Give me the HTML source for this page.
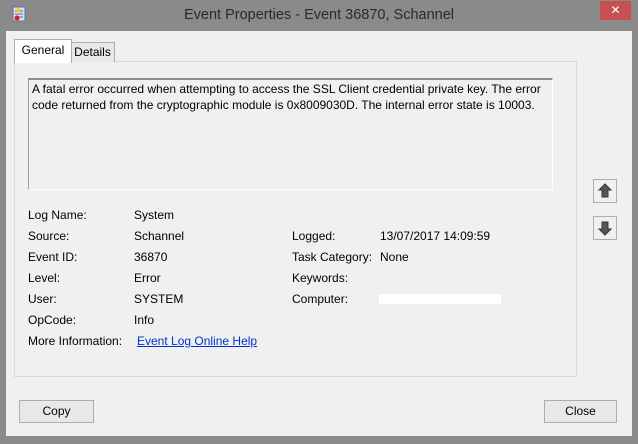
<!DOCTYPE html>
<html><head><style>
body{margin:0;width:638px;height:444px;background:#8a8a8a;font-family:"Liberation Sans",sans-serif;font-size:12px;color:#000;position:relative;overflow:hidden}
.a{position:absolute}
.client{left:6px;top:31px;width:626px;height:405px;background:#f0f0f0}
.lbl{position:absolute;white-space:nowrap}
.btn{position:absolute;background:#e8e8e8;border:1px solid #adadad;text-align:center;line-height:21px;box-sizing:border-box}
</style></head><body>
<svg class="a" style="left:12px;top:6px" width="14" height="16"><rect x="1" y="1" width="12" height="14" fill="#d8dcf0" stroke="#6070a0"/><line x1="3" y1="5" x2="11" y2="5" stroke="#6070a0"/><line x1="3" y1="8" x2="11" y2="8" stroke="#6070a0"/><line x1="3" y1="11" x2="11" y2="11" stroke="#6070a0"/><path d="M6 1 L9 6 L3 6Z" fill="#f0c020"/><circle cx="5" cy="12" r="2.5" fill="#d02020"/></svg>
<div class="a" style="left:0;width:638px;top:7px;text-align:center;font-size:14.5px;color:#2a2a2a">Event Properties - Event 36870, Schannel</div>
<div class="a" style="left:600px;top:1px;width:31px;height:19px;background:#c75050;color:#fff;text-align:center;font-size:12px;line-height:19px">✕</div>
<div class="a client"></div>
<div class="a" style="left:14px;top:61px;width:563px;height:316px;border:1px solid #d9d9d9;background:#f0f0f0;box-sizing:border-box"></div>
<div class="a" style="left:70px;top:42px;width:43px;height:19px;border:1px solid #adadad;border-bottom:none;background:#e8e8e8;text-align:center;line-height:19px">Details</div>
<div class="a" style="left:14px;top:39px;width:56px;height:23px;border:1px solid #adadad;border-bottom:none;background:#fff;text-align:center;line-height:21px">General</div>
<div class="a" style="left:28px;top:78px;width:525px;height:112px;border-top:2px solid #8c8c8c;border-left:1px solid #a0a0a0;border-right:1px solid #fff;border-bottom:1px solid #fff;box-sizing:border-box;padding:1px 3px;line-height:16px">A fatal error occurred when attempting to access the SSL Client credential private key. The error code returned from the cryptographic module is 0x8009030D. The internal error state is 10003.</div>
<div class="btn" style="left:593px;top:179px;width:24px;height:24px;background:#f0f0f0"><svg width="22" height="22" style="position:absolute;left:0;top:0"><path d="M11 4 L17 10 L14 10 L14 17 L8 17 L8 10 L5 10 Z" fill="#555" stroke="#333"/></svg></div>
<div class="btn" style="left:593px;top:216px;width:24px;height:24px;background:#f0f0f0"><svg width="22" height="22" style="position:absolute;left:0;top:0"><path d="M11 18 L17 12 L14 12 L14 5 L8 5 L8 12 L5 12 Z" fill="#555" stroke="#333"/></svg></div>
<div class="lbl" style="left:28px;top:208px">Log Name:</div><div class="lbl" style="left:134px;top:208px">System</div>
<div class="lbl" style="left:28px;top:229px">Source:</div><div class="lbl" style="left:134px;top:229px">Schannel</div>
<div class="lbl" style="left:292px;top:229px">Logged:</div><div class="lbl" style="left:380px;top:229px">13/07/2017 14:09:59</div>
<div class="lbl" style="left:28px;top:250px">Event ID:</div><div class="lbl" style="left:134px;top:250px">36870</div>
<div class="lbl" style="left:292px;top:250px">Task Category:</div><div class="lbl" style="left:380px;top:250px">None</div>
<div class="lbl" style="left:28px;top:271px">Level:</div><div class="lbl" style="left:134px;top:271px">Error</div>
<div class="lbl" style="left:292px;top:271px">Keywords:</div>
<div class="lbl" style="left:28px;top:292px">User:</div><div class="lbl" style="left:134px;top:292px">SYSTEM</div>
<div class="lbl" style="left:292px;top:292px">Computer:</div>
<div class="a" style="left:379px;top:294px;width:122px;height:10px;background:#fff"></div>
<div class="lbl" style="left:28px;top:313px">OpCode:</div><div class="lbl" style="left:134px;top:313px">Info</div>
<div class="lbl" style="left:28px;top:334px">More Information:</div><div class="lbl" style="left:137px;top:334px;color:#0033cc;text-decoration:underline">Event Log Online Help</div>
<div class="btn" style="left:19px;top:400px;width:75px;height:23px">Copy</div>
<div class="btn" style="left:544px;top:400px;width:73px;height:23px">Close</div>
</body></html>
